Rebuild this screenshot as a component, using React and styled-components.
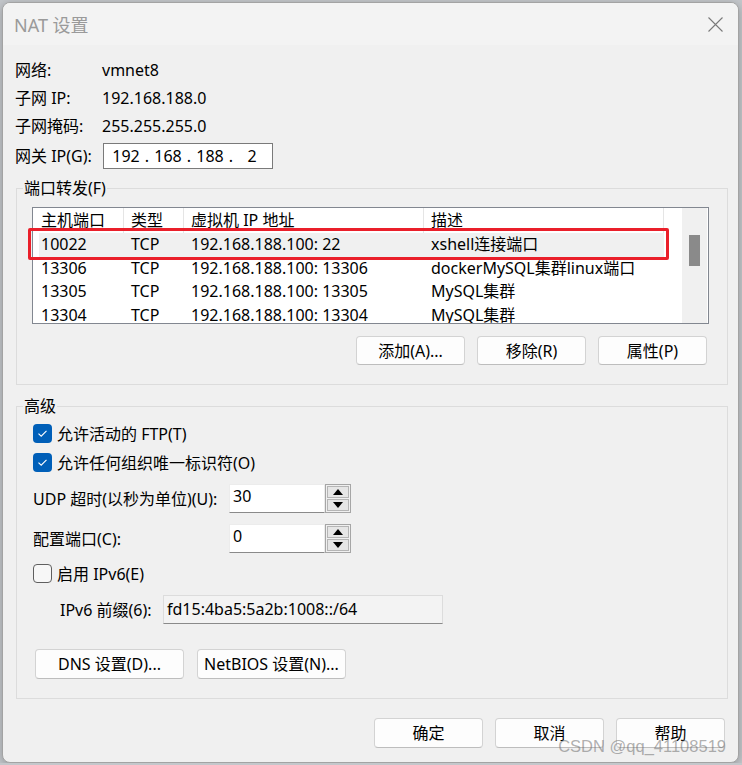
import styled, { createGlobalStyle } from 'styled-components';

const GlobalStyle = createGlobalStyle`
  html, body { margin: 0; padding: 0; }
  body {
    background: #c4c7cb;
    font-family: "Noto Sans", "Noto Sans CJK SC", sans-serif;
    color: #000;
  }
`;

const Dialog = styled.div`
  position: relative;
  box-sizing: border-box;
  margin: 2px 0 0 2px;
  width: 737px;
  height: 761px;
  background: #f0f0f0;
  border: 1px solid #a3a3a3;
  border-radius: 8px;
  overflow: hidden;
  display: flex;
  flex-direction: column;
  box-shadow: 0 2px 10px rgba(0, 0, 0, 0.25);
`;

const TitleBar = styled.div`
  height: 42px;
  flex-shrink: 0;
  background: #f3f3f3;
  display: flex;
  align-items: center;
  justify-content: space-between;
  padding: 0 15px 0 11px;
`;

const Title = styled.div`
  font-size: 18px;
  color: #9a9a9a;
`;

const Body = styled.div`
  flex: 1;
  display: flex;
  flex-direction: column;
  padding: 11px 10px 16px 12px;
  font-size: 16px;
  line-height: 20px;
`;

const InfoRow = styled.div`
  display: grid;
  grid-template-columns: 87px auto;
  align-items: center;
  height: ${(p) => p.$h}px;
  margin-top: ${(p) => p.$mt || 0}px;
`;

const IpBox = styled.div`
  box-sizing: border-box;
  width: 170px;
  height: 26px;
  margin-left: 1px;
  background: #fff;
  border: 1px solid #7a7a7a;
  display: flex;
  align-items: center;
  padding-left: 5px;
`;

const Octet = styled.span`
  width: 34px;
  text-align: center;
`;

const Dot = styled.span`
  width: 8px;
  text-align: center;
`;

const Group = styled.fieldset`
  margin: ${(p) => p.$mt}px 0 0 1px;
  min-width: 0;
  border: 1px solid #dcdcdc;
  padding: ${(p) => p.$pad};
`;

const Legend = styled.legend`
  margin-left: ${(p) => p.$ml}px;
  padding: 0 1px;
  line-height: 20px;
`;

const TableWrap = styled.div`
  position: relative;
`;

const Table = styled.div`
  box-sizing: border-box;
  height: 117px;
  border: 1px solid #828790;
  background: #fff;
  display: flex;
  overflow: hidden;
`;

const Grid = styled.div`
  width: 631px;
  display: flex;
  flex-direction: column;
`;

const cols = '91px 60px 240px 240px';

const HeaderRow = styled.div`
  display: grid;
  grid-template-columns: ${cols};
  height: 25px;
  flex-shrink: 0;
`;

const HeaderCell = styled.div`
  border-right: 1px solid #e5e5e5;
  padding-left: ${(p) => (p.$first ? 8 : 7)}px;
  line-height: 25px;
  white-space: nowrap;
`;

const DataRow = styled.div`
  display: grid;
  grid-template-columns: ${cols};
  height: 23.5px;
  flex-shrink: 0;
  background: ${(p) =>
    p.$selected ? 'linear-gradient(to right, transparent 6px, #f0f0f0 6px)' : 'transparent'};
`;

const Cell = styled.div`
  padding-left: ${(p) => (p.$first ? 8 : 7)}px;
  line-height: 23.5px;
  white-space: nowrap;
`;

const Filler = styled.div`
  flex: 1;
`;

const ScrollTrack = styled.div`
  width: 25px;
  margin-right: 1px;
  background: #f0f0f0;
  display: flex;
  justify-content: center;
`;

const Thumb = styled.div`
  width: 11px;
  height: 31px;
  margin-top: 27px;
  background: #8a8a8a;
`;

const Highlight = styled.div`
  position: absolute;
  left: -4px;
  top: 21px;
  width: 641px;
  height: 32px;
  box-sizing: border-box;
  border: 3px solid #ea1f2a;
  border-radius: 2px;
  pointer-events: none;
`;

const ButtonRow = styled.div`
  display: flex;
  justify-content: ${(p) => (p.$start ? 'flex-start' : 'flex-end')};
  gap: ${(p) => p.$gap || 12}px;
  margin-top: ${(p) => p.$mt}px;
  padding: 0 ${(p) => p.$pr || 0}px 0 ${(p) => p.$pl || 0}px;
`;

const Button = styled.button`
  box-sizing: border-box;
  width: ${(p) => p.$w}px;
  height: ${(p) => p.$h || 30}px;
  padding: 0;
  background: #fdfdfd;
  border: 1px solid #d3d3d3;
  border-bottom-color: #bdbdbd;
  border-radius: 4px;
  font: inherit;
  font-size: 16px;
  color: #000;
`;

const Row = styled.div`
  display: flex;
  align-items: center;
  height: ${(p) => p.$h}px;
  margin-top: ${(p) => p.$mt || 0}px;
  padding-left: ${(p) => p.$pl || 0}px;
`;

const Box = styled.span`
  box-sizing: border-box;
  width: 19px;
  height: 19px;
  margin-right: 5px;
  border-radius: 4px;
  display: flex;
  align-items: center;
  justify-content: center;
  background: ${(p) => (p.$checked ? '#005fb8' : '#f7f7f7')};
  border: ${(p) => (p.$checked ? 'none' : '1px solid #5f5f5f')};
`;

const FieldLabel = styled.span`
  width: ${(p) => p.$w}px;
  flex-shrink: 0;
  white-space: nowrap;
`;

const Input = styled.div`
  box-sizing: border-box;
  width: ${(p) => p.$w}px;
  height: 29px;
  padding: ${(p) => (p.$disabled ? '3px 3px' : '1px 3px')};
  background: ${(p) => (p.$disabled ? '#f3f3f3' : '#fff')};
  border: 1px solid ${(p) => (p.$disabled ? '#dcdcdc' : '#ececec')};
  border-bottom-color: #8a8a8a;
`;

const Spinner = styled.div`
  box-sizing: border-box;
  width: 26px;
  height: 29px;
  border: 1px solid #a6a6a6;
  padding: 1px;
  display: flex;
  flex-direction: column;
  gap: 1px;
`;

const SpinButton = styled.div`
  flex: 1;
  box-sizing: border-box;
  border: 1px solid #b5b5b5;
  background: #e6e6e6;
  display: flex;
  align-items: center;
  justify-content: center;
`;

const Watermark = styled.div`
  position: absolute;
  right: 12px;
  bottom: 6px;
  font-family: "Liberation Sans", sans-serif;
  font-size: 16.5px;
  line-height: 20px;
  color: rgba(110, 110, 110, 0.55);
  pointer-events: none;
`;

const Arrow = ({ up }) => (
  <svg width="10" height="6" viewBox="0 0 10 6">
    <path d={up ? 'M0 6 L5 0 L10 6 Z' : 'M0 0 L5 6 L10 0 Z'} fill="#000" />
  </svg>
);

const CheckBox = ({ checked }) => (
  <Box $checked={checked}>
    {checked && (
      <svg width="11" height="9" viewBox="0 0 11 9">
        <path d="M1.5 4.6 L4.2 7.2 L9.5 1.8" fill="none" stroke="#fff" strokeWidth="1.1" />
      </svg>
    )}
  </Box>
);

const rules = [
  ['10022', 'TCP', '192.168.188.100: 22', 'xshell连接端口'],
  ['13306', 'TCP', '192.168.188.100: 13306', 'dockerMySQL集群linux端口'],
  ['13305', 'TCP', '192.168.188.100: 13305', 'MySQL集群'],
  ['13304', 'TCP', '192.168.188.100: 13304', 'MySQL集群'],
];

const App = () => {
  return (
    <>
      <GlobalStyle />
      <Dialog>
        <TitleBar>
          <Title>NAT 设置</Title>
          <svg width="15" height="15" viewBox="0 0 15 15">
            <path d="M0.5 0.5 L14.5 14.5 M14.5 0.5 L0.5 14.5" stroke="#7a7a7a" strokeWidth="1.1" />
          </svg>
        </TitleBar>
        <Body>
          <InfoRow $h={28}>
            <span>网络:</span>
            <span>vmnet8</span>
          </InfoRow>
          <InfoRow $h={28}>
            <span>子网 IP:</span>
            <span>192.168.188.0</span>
          </InfoRow>
          <InfoRow $h={27}>
            <span>子网掩码:</span>
            <span>255.255.255.0</span>
          </InfoRow>
          <InfoRow $h={26} $mt={4}>
            <span>网关 IP(G):</span>
            <IpBox>
              <Octet>192</Octet>
              <Dot>.</Dot>
              <Octet>168</Octet>
              <Dot>.</Dot>
              <Octet>188</Octet>
              <Dot>.</Dot>
              <Octet>2</Octet>
            </IpBox>
          </InfoRow>

          <Group $mt={9} $pad="9px 18px 19px 15px">
            <Legend $ml={-9}>端口转发(F)</Legend>
            <TableWrap>
              <Table>
                <Grid>
                  <HeaderRow>
                    <HeaderCell $first>主机端口</HeaderCell>
                    <HeaderCell>类型</HeaderCell>
                    <HeaderCell>虚拟机 IP 地址</HeaderCell>
                    <HeaderCell>描述</HeaderCell>
                  </HeaderRow>
                  {rules.map((r, i) => (
                    <DataRow key={i} $selected={i === 0}>
                      <Cell $first>{r[0]}</Cell>
                      <Cell>{r[1]}</Cell>
                      <Cell>{r[2]}</Cell>
                      <Cell>{r[3]}</Cell>
                    </DataRow>
                  ))}
                </Grid>
                <Filler />
                <ScrollTrack>
                  <Thumb />
                </ScrollTrack>
              </Table>
              <Highlight />
            </TableWrap>
            <ButtonRow $mt={12} $pr={2}>
              <Button $w={109} $h={29}>添加(A)...</Button>
              <Button $w={109} $h={29}>移除(R)</Button>
              <Button $w={109} $h={29}>属性(P)</Button>
            </ButtonRow>
          </Group>

          <Group $mt={11} $pad="8px 16px 19px 16px">
            <Legend $ml={-10}>高级</Legend>
            <Row $h={19}>
              <CheckBox checked />
              允许活动的 FTP(T)
            </Row>
            <Row $h={19} $mt={10}>
              <CheckBox checked />
              允许任何组织唯一标识符(O)
            </Row>
            <Row $h={29} $mt={12}>
              <FieldLabel $w={196}>UDP 超时(以秒为单位)(U):</FieldLabel>
              <Input $w={96}>30</Input>
              <Spinner>
                <SpinButton><Arrow up /></SpinButton>
                <SpinButton><Arrow /></SpinButton>
              </Spinner>
            </Row>
            <Row $h={29} $mt={11}>
              <FieldLabel $w={196}>配置端口(C):</FieldLabel>
              <Input $w={96}>0</Input>
              <Spinner>
                <SpinButton><Arrow up /></SpinButton>
                <SpinButton><Arrow /></SpinButton>
              </Spinner>
            </Row>
            <Row $h={19} $mt={11}>
              <CheckBox />
              启用 IPv6(E)
            </Row>
            <Row $h={29} $mt={12} $pl={27}>
              <FieldLabel $w={103}>IPv6 前缀(6):</FieldLabel>
              <Input $w={280} $disabled>fd15:4ba5:5a2b:1008::/64</Input>
            </Row>
            <ButtonRow $start $mt={25} $gap={13} $pl={2}>
              <Button $w={149}>DNS 设置(D)...</Button>
              <Button $w={149}>NetBIOS 设置(N)...</Button>
            </ButtonRow>
          </Group>

          <ButtonRow $mt={19} $pr={3}>
            <Button $w={109}>确定</Button>
            <Button $w={109}>取消</Button>
            <Button $w={109}>帮助</Button>
          </ButtonRow>
        </Body>
        <Watermark>CSDN @qq_41108519</Watermark>
      </Dialog>
    </>
  );
};

export default App;
